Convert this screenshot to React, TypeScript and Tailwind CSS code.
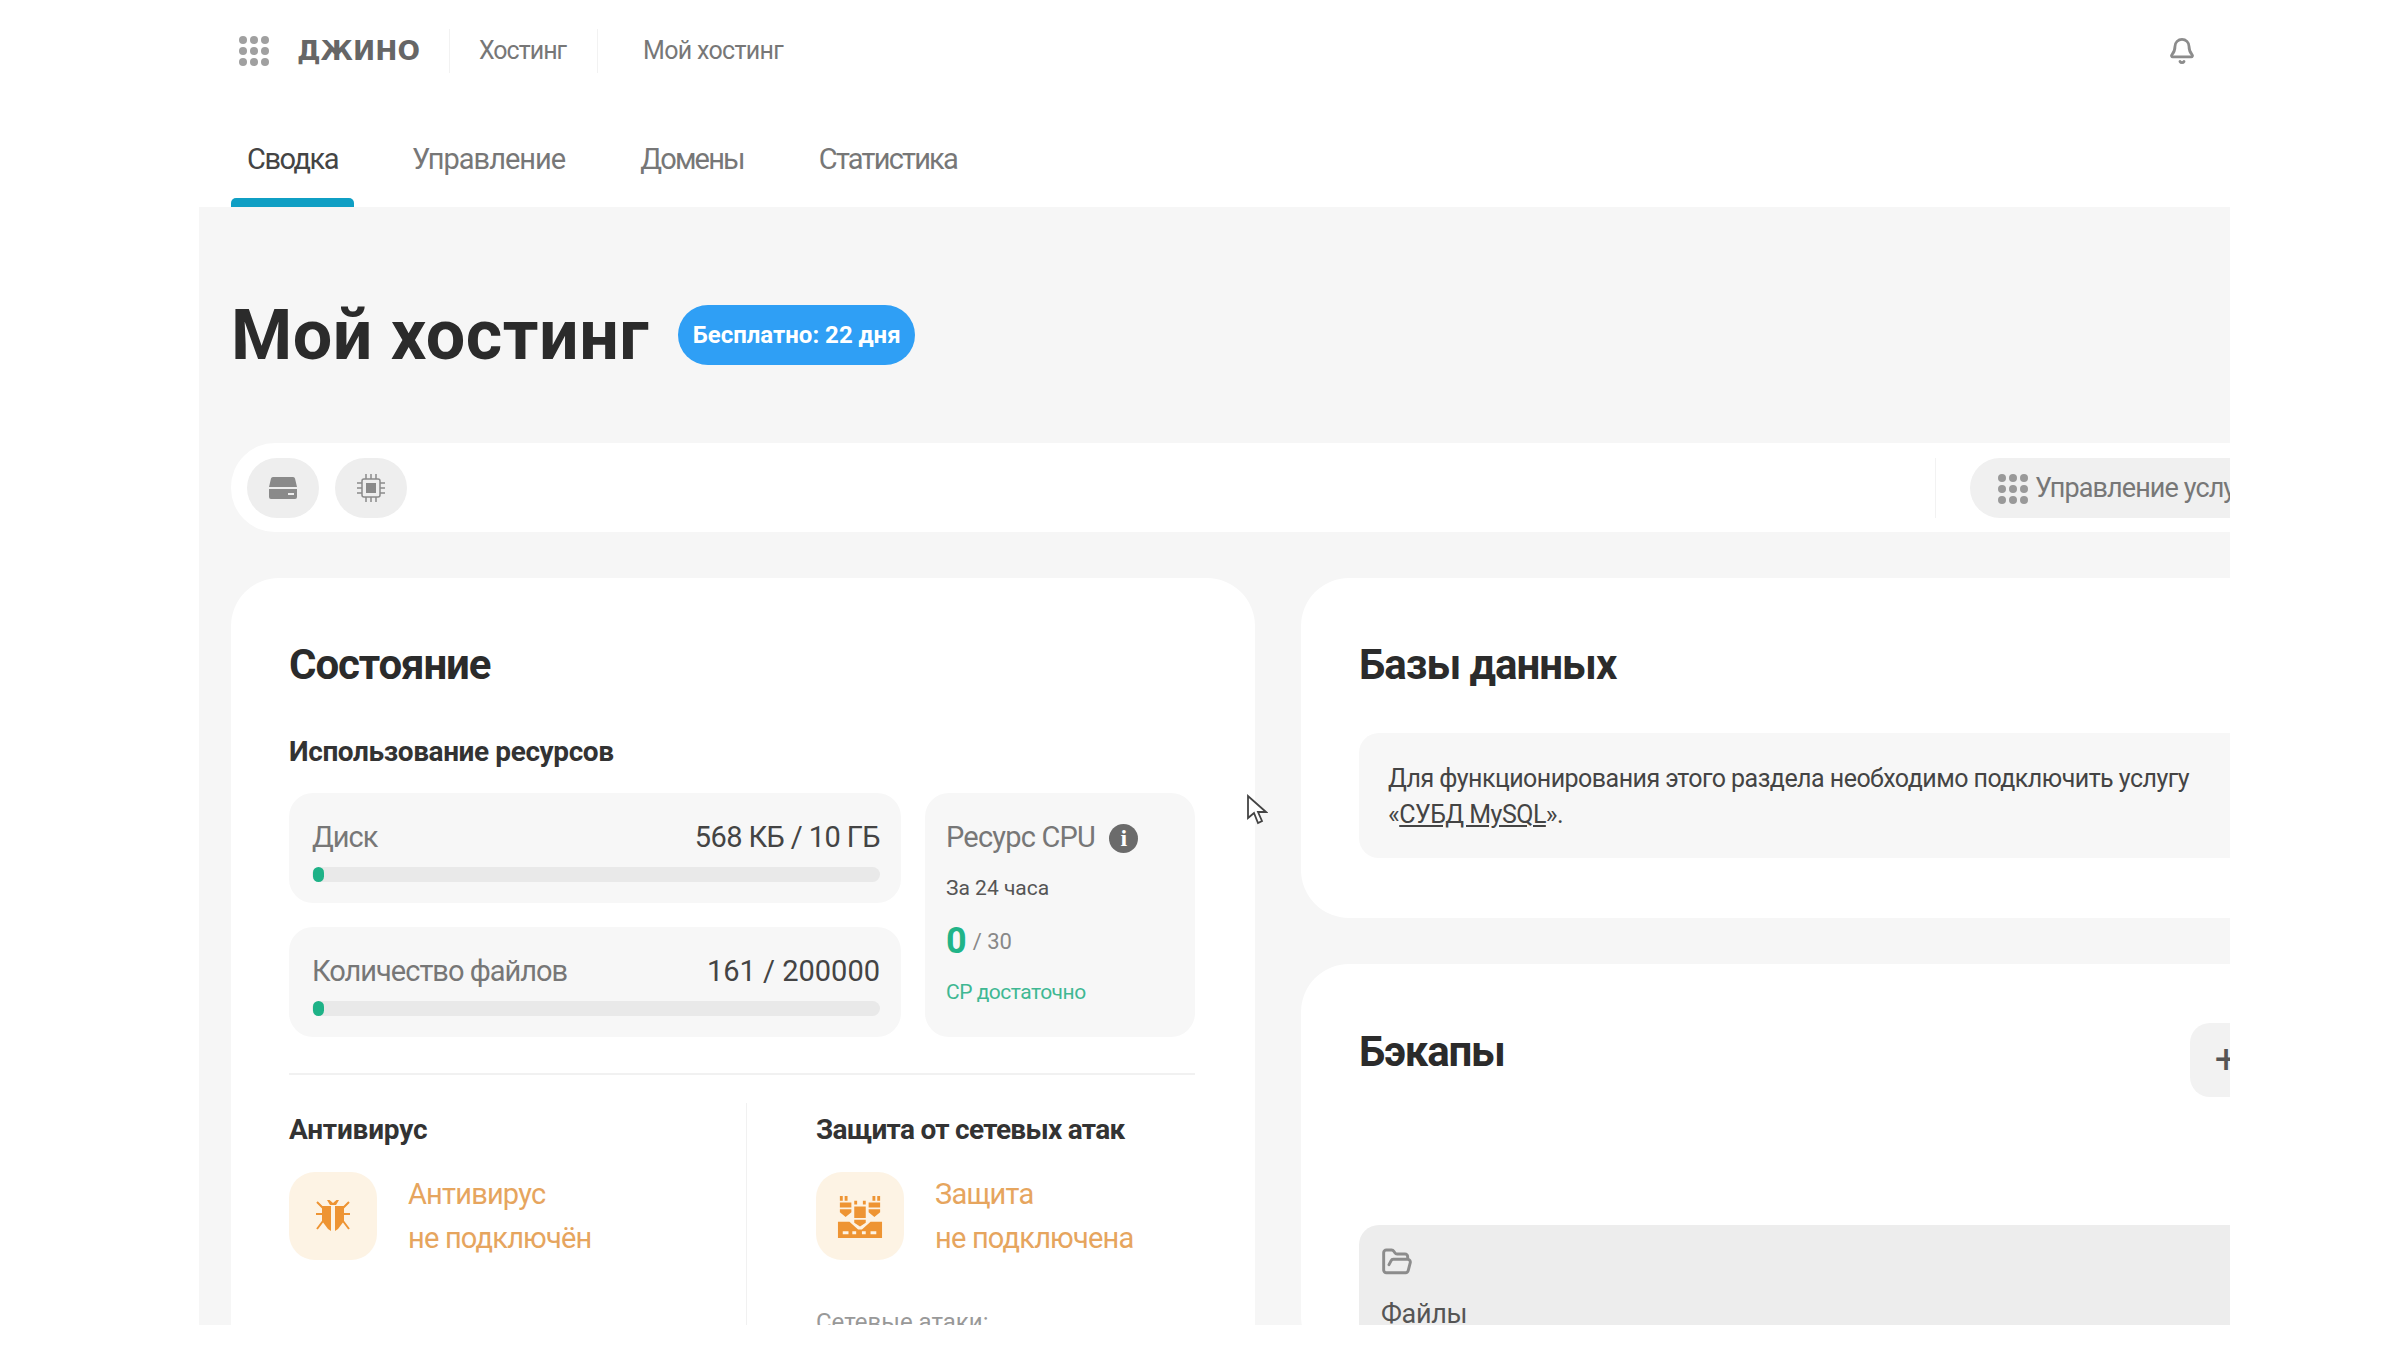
import { Bell, FolderOpen } from 'lucide-react';

const DotsIcon = ({ className }: { className: string }) => (
    <svg viewBox="0 0 30 30" className={className} fill="currentColor">
        {[4, 15, 26].map((y) =>
            [4, 15, 26].map((x) => <circle key={`${x}-${y}`} cx={x} cy={y} r="4" />)
        )}
    </svg>
);

const DiskIcon = () => (
    <svg viewBox="0 0 30 24" className="h-[24px] w-[30px] text-[#8a8a8a]" fill="currentColor">
        <path d="M5 1h20a2 2 0 0 1 2 1.6L29 11H1l2-8.400A2 2 0 0 1 5 1z" />
        <path fillRule="evenodd" d="M1 13h28v8a2 2 0 0 1-2 2H3a2 2 0 0 1-2-2v-8zm19 4v2h6v-2h-6z" />
    </svg>
);

const ChipIcon = () => (
    <svg viewBox="0 0 30 30" className="h-[30px] w-[30px] text-[#8a8a8a]" fill="none" stroke="currentColor" strokeWidth="1.5">
        <rect x="6" y="6" width="18" height="18" rx="2" />
        <rect x="10" y="10" width="10" height="10" fill="currentColor" stroke="none" />
        <path d="M10 1v5M15 1v5M20 1v5M10 24v5M15 24v5M20 24v5M1 10h5M1 15h5M1 20h5M24 10h5M24 15h5M24 20h5" />
    </svg>
);

const BugIcon = () => (
    <svg viewBox="0 0 34 33" className="h-[33px] w-[34px] text-[#ee9433]" fill="currentColor">
        <path d="M11 0l2.500 0 3.500 3 3.500-3 2.500 0-3 5h-6z" />
        <path d="M6 6h9v25l-3-2-6-8zM28 6h-9v25l3-2 6-8z" />
        <path d="M1 2l6 6M0 14h6M1 29l6-8M33 2l-6 6M34 14h-6M33 29l-6-8" fill="none" stroke="currentColor" strokeWidth="2" />
    </svg>
);

const WallIcon = () => (
    <svg viewBox="0 0 48 48" className="h-[46px] w-[46px] text-[#ee9433]" fill="currentColor">
        <path d="M3 3h3v5H3zM8 3h3v5H8zM37 3h3v5h-3zM42 3h3v5h-3z" />
        <path d="M3 10h12v5H3zM33 10h12v5H33zM3 17h12v3l-6 5-6-5zM33 17h12v3l-6 5-6-5z" />
        <path d="M18 8h3v4h-3zM27 8h3v4h-3zM18 14h12v12H18zM18 28h12v3l-6 4-6-4z" />
        <path fillRule="evenodd" d="M1 30h4l8 0 9 8h4l9-8h12v17H1V30zm5 10v3h6v-3H6zm10 0v3h4v-3h-4zm10 0v3h4v-3h-4zm9 0v3h6v-3h-6z" />
    </svg>
);

const Bar = () => (
    <div className="mt-[9px] h-[15px] w-full rounded-full bg-[#e9e9e9]">
        <div className="ml-px h-full w-[11px] rounded-full bg-[#1eb287]" />
    </div>
);

const ResourceBox = ({ label, value, valueClass }: { label: string; value: string; valueClass: string }) => (
    <div className="h-[110px] rounded-[24px] bg-[#f7f7f7] pl-[23px] pr-[21px] pt-[25px]">
        <div className="flex h-[40px] items-center justify-between text-[29px]">
            <span className="tracking-[-1px] text-[#777777]">{label}</span>
            <span className={`text-[#444444] ${valueClass}`}>{value}</span>
        </div>
        <Bar />
    </div>
);

const WarnStatus = ({ icon, top, bottom }: { icon: React.ReactNode; top: string; bottom: string }) => (
    <div className="mt-[24px] flex gap-[31px]">
        <div className="flex h-[88px] w-[88px] items-center justify-center rounded-[26px] bg-[#fdf3e4]">{icon}</div>
        <div className="text-[29px] leading-[44px] tracking-[-0.8px] text-[#e6a55e]">
            <div>{top}</div>
            <div>{bottom}</div>
        </div>
    </div>
);

export default function App() {
    return (
        <div className="h-[1350px] w-[2400px] overflow-hidden bg-white font-['Roboto',sans-serif] text-[#444444]">
            <div className="relative ml-[199px] h-[1325px] w-[2031px] overflow-hidden">
                {/* Top bar */}
                <div className="flex h-[100px] items-center pl-[40px] pr-[32px] pt-[2px]">
                    <DotsIcon className="h-[30px] w-[30px] text-[#a0a0a0]" />
                    <span className="ml-[28px] font-['DejaVu_Sans',sans-serif] text-[26.500px] font-bold text-[#666666]">ДЖИНО</span>
                    <div className="ml-[29px] h-[44px] w-px bg-[#f2f2f2]" />
                    <span className="ml-[29px] text-[25px] tracking-[-1px] text-[#777777]">Хостинг</span>
                    <div className="ml-[31px] h-[44px] w-px bg-[#f2f2f2]" />
                    <span className="ml-[45px] text-[25px] tracking-[-0.7px] text-[#777777]">Мой хостинг</span>
                    <Bell className="ml-auto mr-[2px] h-[28px] w-[28px] text-[#8c8c8c]" strokeWidth={2.4} />
                </div>

                {/* Tabs */}
                <div className="flex h-[107px] pl-[32px] text-[29px] text-[#777777]">
                    <div className="flex h-full w-[123px] flex-col items-center">
                        <span className="mt-[38px] leading-[42px] tracking-[-1.500px] text-[#444444]">Сводка</span>
                        <div className="mt-auto h-[9px] w-full rounded-t-[5px] bg-[#0f9fc4]" />
                    </div>
                    <span className="ml-[58px] mt-[38px] leading-[42px] tracking-[-1px]">Управление</span>
                    <span className="ml-[75px] mt-[38px] leading-[42px] tracking-[-1.800px]">Домены</span>
                    <span className="ml-[75px] mt-[38px] leading-[42px] tracking-[-1.800px]">Статистика</span>
                </div>

                <div className="h-[1118px] overflow-hidden bg-[#f6f6f6] pl-[32px]">
                    <div className="mt-[98px] flex h-[60px] items-center">
                        <h1 className="text-[70px] font-bold tracking-[0.5px] text-[#2b2b2b]">Мой хостинг</h1>
                        <span className="ml-[29px] flex h-[60px] w-[237px] items-center justify-center rounded-full bg-[#2f9ff5] text-[24px] font-bold text-white">
                            Бесплатно: 22 дня
                        </span>
                    </div>

                    {/* Toolbar */}
                    <div className="mt-[78px] flex h-[89px] w-[2080px] items-center justify-between rounded-l-[44px] bg-white pl-[16px]">
                        <div className="flex gap-[16px]">
                            <button className="flex h-[60px] w-[72px] items-center justify-center rounded-full bg-[#eeeeee]"><DiskIcon /></button>
                            <button className="flex h-[60px] w-[72px] items-center justify-center rounded-full bg-[#eeeeee]"><ChipIcon /></button>
                        </div>
                        <div className="flex w-[376px] items-center">
                            <div className="h-[60px] w-px bg-[#f2f2f2]" />
                            <div className="ml-[34px] flex h-[60px] flex-1 items-center rounded-l-full bg-[#f0f0f0] pl-[28px] pt-[2px] text-[27px] tracking-[-0.9px] whitespace-nowrap text-[#777777]">
                                <DotsIcon className="mr-[7px] h-[30px] w-[30px] shrink-0 text-[#999999]" />
                                Управление услугой
                            </div>
                        </div>
                    </div>

                    <div className="mt-[46px] flex gap-[46px]">
                        {/* Left card */}
                        <div className="h-[800px] w-[1024px] shrink-0 rounded-[48px] bg-white pl-[58px] pr-[60px] pt-[62px]">
                            <h2 className="text-[42px] font-bold leading-[50px] tracking-[-1.100px] text-[#2b2b2b]">Состояние</h2>
                            <h3 className="mt-[44px] text-[28px] font-bold leading-[36px] tracking-[-0.4px] text-[#333333]">Использование ресурсов</h3>
                            <div className="mt-[23px] flex gap-[24px]">
                                <div className="flex w-[612px] flex-col gap-[24px]">
                                    <ResourceBox label="Диск" value="568 КБ / 10 ГБ" valueClass="tracking-[-0.6px]" />
                                    <ResourceBox label="Количество файлов" value="161 / 200000" valueClass="tracking-[0px]" />
                                </div>
                                <div className="h-[244px] w-[270px] rounded-[24px] bg-[#f7f7f7] pl-[21px] pt-[25px]">
                                    <div className="flex h-[40px] items-center text-[29px] tracking-[-0.8px] text-[#777777]">
                                        Ресурс CPU
                                        <span className="ml-[14px] flex h-[29px] w-[29px] items-center justify-center rounded-full bg-[#6b6b6b] font-['Liberation_Serif',serif] text-[24px] font-bold text-white">i</span>
                                    </div>
                                    <div className="mt-[15px] text-[21px] leading-[30px] text-[#555555]">За 24 часа</div>
                                    <div className="mt-[18px] flex h-[40px] items-center gap-[6px]">
                                        <span className="text-[36px] font-bold text-[#21b488]">0</span>
                                        <span className="text-[22px] text-[#888888]">/ 30</span>
                                    </div>
                                    <div className="mt-[16px] text-[21px] leading-[30px] tracking-[-0.5px] text-[#3fb893]">CP достаточно</div>
                                </div>
                            </div>
                            <div className="mt-[36px] h-[2px] bg-[#f1f1f1]" />
                            <div className="mt-[28px] flex">
                                <div className="h-[222px] w-[458px] border-r border-[#f1f1f1] pt-[9px]">
                                    <h3 className="text-[28px] font-bold leading-[36px] tracking-[-0.2px] text-[#333333]">Антивирус</h3>
                                    <WarnStatus icon={<BugIcon />} top="Антивирус" bottom="не подключён" />
                                </div>
                                <div className="pl-[69px] pt-[9px]">
                                    <h3 className="text-[28px] font-bold leading-[36px] tracking-[-0.7px] text-[#333333]">Защита от сетевых атак</h3>
                                    <WarnStatus icon={<WallIcon />} top="Защита" bottom="не подключена" />
                                    <div className="mt-[47px] text-[24px] leading-[30px] text-[#999999]">Сетевые атаки:</div>
                                </div>
                            </div>
                        </div>

                        {/* Right column */}
                        <div className="flex w-[1024px] shrink-0 flex-col gap-[46px]">
                            <div className="h-[340px] rounded-[48px] bg-white pl-[58px] pt-[62px]">
                                <h2 className="text-[42px] font-bold leading-[50px] tracking-[-1px] text-[#2b2b2b]">Базы данных</h2>
                                <div className="mt-[43px] h-[125px] rounded-[20px] bg-[#f7f7f7] px-[29px] pt-[28px] text-[25px] leading-[36px] tracking-[-0.53px] text-[#444444]">
                                    Для функционирования этого раздела необходимо подключить услугу
                                    <br />
                                    «<span className="underline">СУБД MySQL</span>».
                                </div>
                            </div>
                            <div className="h-[400px] rounded-[48px] bg-white pl-[58px]">
                                <div className="flex h-[261px] items-start justify-between">
                                    <h2 className="mt-[63px] text-[42px] font-bold leading-[50px] tracking-[-1.200px] text-[#2b2b2b]">Бэкапы</h2>
                                    <button className="mr-[63px] mt-[59px] flex h-[74px] w-[72px] items-center justify-center rounded-[20px] bg-[#f2f2f2] text-[40px] text-[#555555]">+</button>
                                </div>
                                <div className="h-[140px] rounded-t-[20px] bg-[#ededed] pl-[22px] pt-[21px]">
                                    <FolderOpen className="h-[32px] w-[32px] text-[#8c8c8c]" strokeWidth={2.2} />
                                    <div className="mt-[18px] text-[27px] leading-[36px] tracking-[-0.3px] text-[#555555]">Файлы</div>
                                </div>
                            </div>
                        </div>
                    </div>
                </div>

                {/* Mouse pointer */}
                <svg viewBox="0 0 22 32" className="absolute left-[1047px] top-[794px] h-[32px] w-[22px]" fill="#ffffff" stroke="#444444" strokeWidth="1.800">
                    <path d="M2 2v22l6-5 4 10 4-2-4-9h8z" />
                </svg>
            </div>
        </div>
    );
}
